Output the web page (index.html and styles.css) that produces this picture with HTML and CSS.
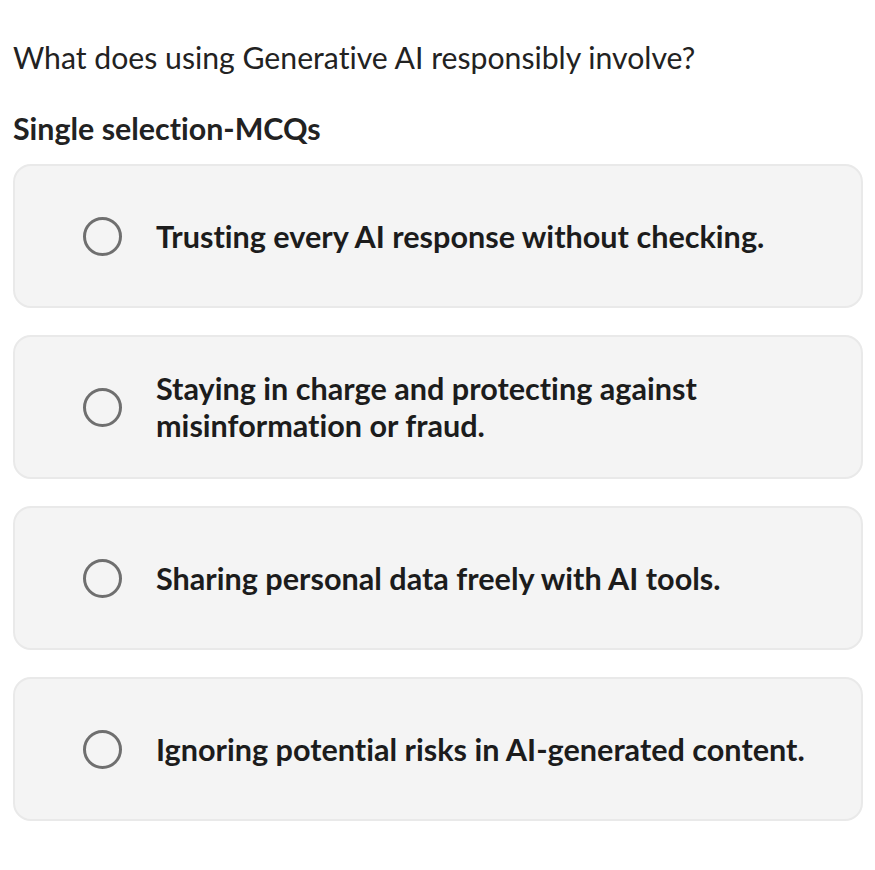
FILE: index.html
```html
<!DOCTYPE html>
<html>
<head>
<meta charset="utf-8">
<link rel="stylesheet" href="styles.css">
</head>
<body>
<div class="page">
  <h1 class="question">What does using Generative AI responsibly involve?</h1>
  <h2 class="kind">Single selection-MCQs</h2>
  <div class="options">
    <label class="option"><span class="radio"></span><span class="text">Trusting every AI response without checking.</span></label>
    <label class="option"><span class="radio"></span><span class="text">Staying in charge and protecting against misinformation or fraud.</span></label>
    <label class="option"><span class="radio"></span><span class="text">Sharing personal data freely with AI tools.</span></label>
    <label class="option"><span class="radio"></span><span class="text">Ignoring potential risks in AI-generated content.</span></label>
  </div>
</div>
</body>
</html>
```
FILE: styles.css
```css
html, body {
  margin: 0;
  padding: 0;
  background: #ffffff;
}
.page {
  font-family: Lato, "Noto Sans", sans-serif;
  font-variant-ligatures: none;
  color: #222222;
  padding: 37px 12px 0 13px;
}
.question {
  margin: 0;
  font-size: 30.2px;
  font-weight: 400;
  line-height: 40px;
  color: #222222;
}
.kind {
  margin: 31px 0 0 0;
  font-size: 30.4px;
  font-weight: 700;
  line-height: 40px;
  color: #222222;
}
.options {
  margin-top: 16px;
  display: flex;
  flex-direction: column;
  gap: 27px;
}
.option {
  box-sizing: border-box;
  min-height: 144px;
  display: flex;
  align-items: center;
  gap: 34px;
  padding: 0 40px 0 68px;
  background: #f4f4f4;
  border: 2px solid #e9e9e9;
  border-radius: 18px;
}
.radio {
  flex: none;
  box-sizing: border-box;
  width: 39px;
  height: 39px;
  border: 3.8px solid #6f6f6f;
  border-radius: 50%;
}
.text {
  font-size: 30.6px;
  font-weight: 700;
  line-height: 37px;
  color: #1c1c1c;
}
```
